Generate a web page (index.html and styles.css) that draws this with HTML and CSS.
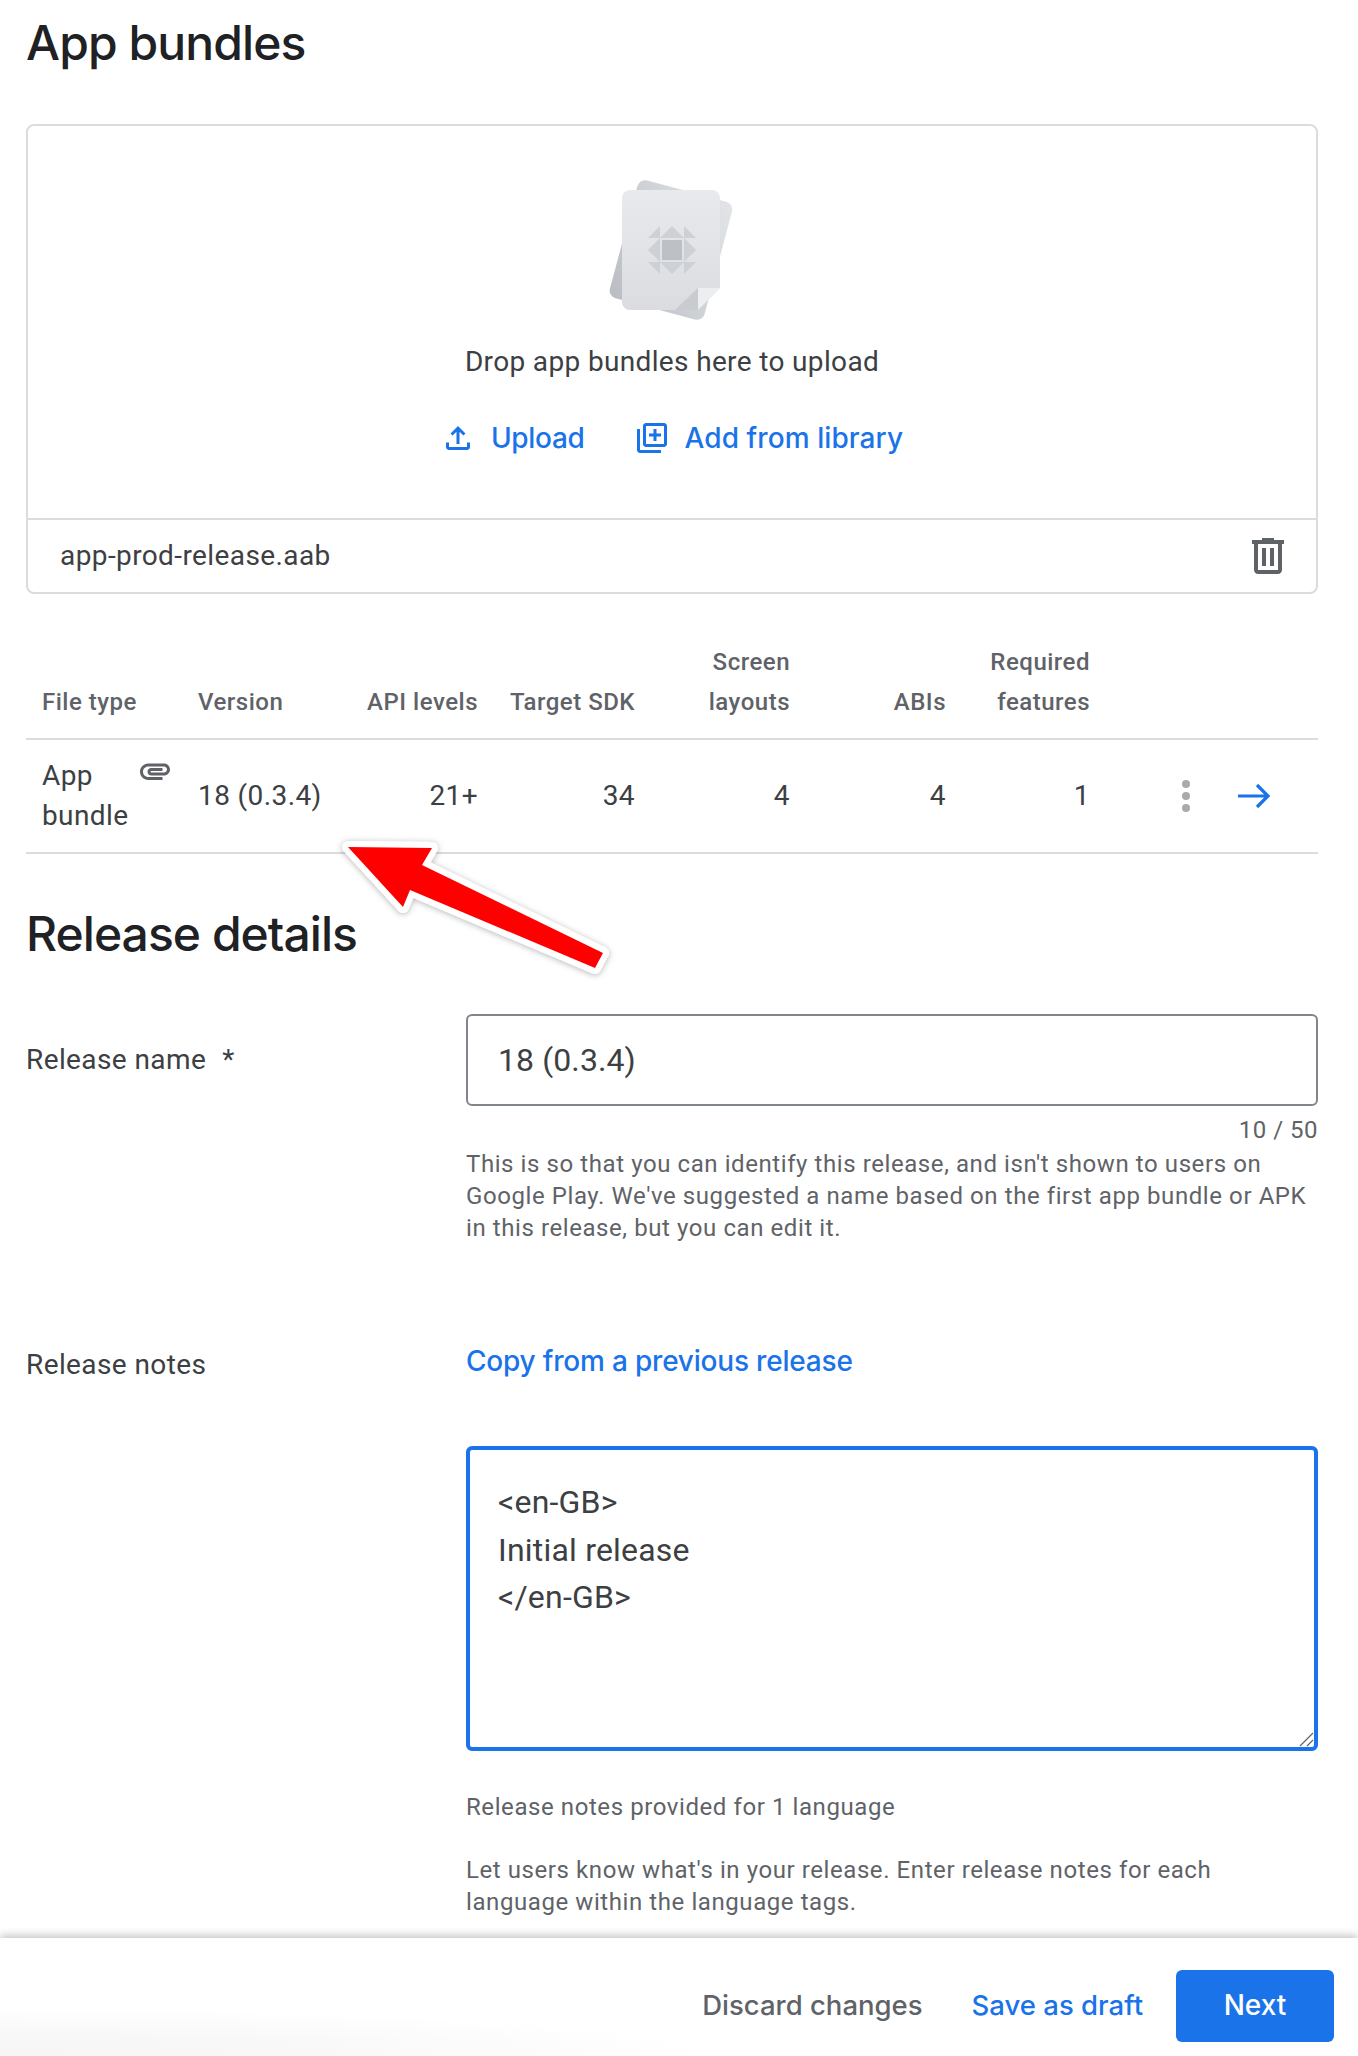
FILE: index.html
```html
<!DOCTYPE html>
<html lang="en">
<head>
<meta charset="utf-8">
<title>App bundles</title>
<link rel="stylesheet" href="styles.css">
</head>
<body>
<main class="page">
  <h1 class="h-bundles">App bundles</h1>

  <section class="upload">
    <div class="drop">
      <svg class="art" width="150" height="160" viewBox="0 0 150 160">
        <defs>
          <linearGradient id="back" x1="1" y1="0" x2="0" y2="1"><stop offset="0" stop-color="#e3e5e8"/><stop offset="1" stop-color="#b9bdc2"/></linearGradient>
          <linearGradient id="front" x1="0" y1="0" x2="0" y2="1"><stop offset="0" stop-color="#e8eaed"/><stop offset="1" stop-color="#dadce0"/></linearGradient>
        </defs>
        <rect x="27" y="9" width="98" height="122" rx="8" fill="url(#back)" transform="rotate(15 76 70)"/>
        <path d="M35 10h82a8 8 0 0 1 8 8v90l-22 22H35a8 8 0 0 1-8-8V18a8 8 0 0 1 8-8z" fill="url(#front)"/>
        <path d="M103 108v22H80z" fill="#c9cbcf"/>
        <path d="M103 108h22l-22 22z" fill="#eceef0"/>
        <rect x="67" y="60" width="20" height="20" fill="#bdc1c6"/>
        <g fill="#cdd0d4">
          <path d="M77 46l12 12H65zM77 94l12-12H65zM53 70l12-12v24zM101 70L89 58v24z"/>
          <path d="M65 46v12H53zM89 46v12h12zM65 94V82H53zM89 94V82h12z"/>
        </g>
      </svg>
      <p class="drop-text">Drop app bundles here to upload</p>
      <div class="drop-actions">
        <a class="action act-upload">
          <svg class="ico36" viewBox="0 0 24 24"><path d="M18 15v3H6v-3H4v3c0 1.100.9 2 2 2h12c1.100 0 2-.9 2-2v-3h-2zM7 9l1.410 1.410L11 7.830V16h2V7.830l2.590 2.580L17 9l-5-5-5 5z"/></svg>
          <span>Upload</span>
        </a>
        <a class="action act-lib">
          <svg class="ico36" viewBox="0 0 24 24"><path d="M4 6H2v14c0 1.100.9 2 2 2h14v-2H4V6zm16-4H8c-1.100 0-2 .9-2 2v12c0 1.100.9 2 2 2h12c1.100 0 2-.9 2-2V4c0-1.100-.9-2-2-2zm0 14H8V4h12v12zm-7-2h2v-3h3V9h-3V6h-2v3h-3v2h3z"/></svg>
          <span>Add from library</span>
        </a>
      </div>
    </div>
    <div class="file-row">
      <span>app-prod-release.aab</span>
      <svg class="trash" viewBox="0 0 24 24"><path d="M15 4V3H9v1H4v2h1v13c0 1.100.9 2 2 2h10c1.100 0 2-.9 2-2V6h1V4h-5zm2 15H7V6h10v13zM9 8h2v9H9zm4 0h2v9h-2z"/></svg>
    </div>
  </section>

  <section class="table">
    <div class="thead">
      <div class="th th-left pad">File type</div>
      <div class="th th-left">Version</div>
      <div class="th">API levels</div>
      <div class="th">Target SDK</div>
      <div class="th">Screen<br>layouts</div>
      <div class="th">ABIs</div>
      <div class="th">Required<br>features</div>
      <div></div>
    </div>
    <div class="tbody">
      <div class="td td-type pad">
        <span class="type-text">App bundle</span>
        <svg class="clip" viewBox="0 0 24 24"><path d="M2 12.500C2 9.460 4.460 7 7.500 7H18c2.210 0 4 1.790 4 4s-1.790 4-4 4H9.500C8.120 15 7 13.880 7 12.500S8.120 10 9.500 10H17v2H9.410c-.55 0-.55 1 0 1H18c1.100 0 2-.9 2-2s-.9-2-2-2H7.500C5.570 9 4 10.570 4 12.500S5.570 16 7.500 16H17v2H7.500C4.460 18 2 15.540 2 12.500z"/></svg>
      </div>
      <div class="td td-left">18 (0.3.4)</div>
      <div class="td">21+</div>
      <div class="td">34</div>
      <div class="td">4</div>
      <div class="td">4</div>
      <div class="td">1</div>
      <div class="td-actions">
        <span class="kebab"><i></i><i></i><i></i></span>
        <svg class="go" viewBox="0 0 32 26"><path d="M0 13h30M19 2l11 11-11 11" fill="none" stroke="#1a73e8" stroke-width="3.200"/></svg>
      </div>
    </div>
  </section>

  <h2 class="h-details">Release details</h2>

  <section class="field name-field">
    <div class="label">Release name<span class="star">*</span></div>
    <div class="control">
      <div class="input">18 (0.3.4)</div>
      <div class="counter">10 / 50</div>
      <p class="help">This is so that you can identify this release, and isn't shown to users on<br>Google Play. We've suggested a name based on the first app bundle or APK<br>in this release, but you can edit it.</p>
    </div>
  </section>

  <section class="field notes-field">
    <div class="label">Release notes</div>
    <div class="control">
      <a class="copy">Copy from a previous release</a>
      <div class="textarea">
        <div>&lt;en-GB&gt;</div>
        <div>Initial release</div>
        <div>&lt;/en-GB&gt;</div>
        <svg class="grip" viewBox="0 0 16 16"><path d="M15 2L2 15M15 9l-6 6" fill="none" stroke="#5f6368" stroke-width="1.200"/></svg>
      </div>
      <p class="help help-a">Release notes provided for 1 language</p>
      <p class="help help-b">Let users know what's in your release. Enter release notes for each<br>language within the language tags.</p>
    </div>
  </section>
</main>

<footer class="bar">
  <a class="bar-btn discard">Discard changes</a>
  <a class="bar-btn draft">Save as draft</a>
  <a class="bar-btn next">Next</a>
</footer>

<svg class="callout" width="300" height="160" viewBox="330 825 300 160">
  <defs><filter id="sh" x="-10%" y="-10%" width="120%" height="120%"><feDropShadow dx="0" dy="1" stdDeviation="3" flood-color="#000" flood-opacity=".3"/></filter></defs>
  <path filter="url(#sh)" d="M348 847L432 848L422 865L603 953L595 968L410 890L403 907Z" fill="#fff" stroke="#fff" stroke-width="12" stroke-linejoin="round"/>
  <path d="M348 847L432 848L422 865L603 953L595 968L410 890L403 907Z" fill="#f00"/>
</svg>
</body>
</html>
```

FILE: styles.css
```css
* { box-sizing: border-box; }
html, body { margin: 0; padding: 0; }
body {
  width: 1358px;
  height: 2056px;
  overflow: hidden;
  position: relative;
  display: flex;
  flex-direction: column;
  background: #fff;
  color: #3c4043;
  font-family: Roboto, "Liberation Sans", sans-serif;
}
p { margin: 0; }
a { color: #1a73e8; }

.page { flex: 1; min-height: 0; overflow: hidden; padding: 0 40px 0 26px; }

.h-bundles, .h-details {
  margin: 0;
  font-family: Inter, Roboto, sans-serif;
  font-weight: 500;
  color: #202124;
  font-size: 48px;
  line-height: 64px;
  letter-spacing: -.9px;
}
.h-bundles { height: 124px; padding-top: 11px; }

.upload { border: 2px solid #dadce0; border-radius: 8px; height: 470px; display: flex; flex-direction: column; }
.drop { height: 394px; border-bottom: 2px solid #dadce0; display: flex; flex-direction: column; align-items: center; padding-top: 54px; }
.art { display: block; margin-left: -4px; flex: none; }
.drop-text { font-size: 28px; line-height: 40px; margin-top: 2px; letter-spacing: .35px; }
.drop-actions { display: flex; margin-top: 36px; margin-left: -1px; }
.action { display: flex; align-items: center; gap: 15px; font-family: Inter, Roboto, sans-serif; font-size: 28px; font-weight: 500; line-height: 40px; }
.act-upload { margin-right: 49px; }
.act-upload span { letter-spacing: -.3px; }
.act-lib span { letter-spacing: .08px; }
.ico36 { width: 36px; height: 36px; fill: #1a73e8; flex: none; }
.file-row { flex: 1; display: flex; align-items: center; justify-content: space-between; padding: 0 24px 2px 32px; font-size: 28px; letter-spacing: .4px; }
.trash { width: 48px; height: 48px; fill: #5f6368; margin-bottom: -2px; }

.table { margin-top: 40px; }
.thead, .tbody { display: grid; grid-template-columns: 172px 150px 130px 157px 155px 156px 144px 1fr; }
.thead { border-bottom: 2px solid #dadce0; height: 106px; padding-bottom: 16px; align-items: end; }
.th { font-size: 24px; font-weight: 500; color: #5f6368; line-height: 40px; text-align: right; letter-spacing: .5px; }
.th-left { text-align: left; }
.pad { padding-left: 16px; }
.tbody { border-bottom: 2px solid #dadce0; height: 114px; align-items: center; }
.td { font-size: 28px; line-height: 40px; text-align: right; letter-spacing: .4px; }
.td-left { text-align: left; }
.td-type { display: flex; align-items: flex-start; justify-content: space-between; padding-right: 25px; text-align: left; }
.type-text { width: 90px; }
.clip { width: 36px; height: 36px; fill: #5f6368; margin: -3px 0 0 0; flex: none; }
.td-actions { display: flex; align-items: center; justify-content: flex-end; padding-right: 48px; gap: 48px; }
.kebab { display: flex; flex-direction: column; gap: 4px; }
.kebab i { display: block; width: 8px; height: 8px; border-radius: 50%; background: #aaa; }
.go { width: 32px; height: 26px; }

.h-details { margin-top: 48px; height: 112px; letter-spacing: -.95px; }

.field { display: grid; grid-template-columns: 440px 1fr; }
.label { font-size: 28px; line-height: 40px; letter-spacing: .4px; }
.star { margin-left: 16px; }
.name-field .label { padding-top: 26px; }
.input { height: 92px; border: 2px solid #80868b; border-radius: 6px; padding: 0 30px; font-size: 32px; line-height: 88px; letter-spacing: .1px; }
.counter { font-size: 24px; line-height: 32px; text-align: right; color: #5f6368; margin-top: 8px; letter-spacing: .5px; }
.help { font-size: 24px; line-height: 32px; color: #5f6368; letter-spacing: .58px; white-space: nowrap; }
.name-field .help { margin-top: 2px; }

.notes-field { margin-top: 97px; }
.notes-field .label { padding-top: 4px; }
.copy { display: block; font-family: Inter, Roboto, sans-serif; font-weight: 500; font-size: 28px; line-height: 40px; letter-spacing: -.2px; }
.textarea { position: relative; margin-top: 65px; height: 305px; border: 4px solid #1a73e8; border-radius: 6px; padding: 29px 28px; font-size: 32px; line-height: 47.500px; letter-spacing: .2px; }
.grip { position: absolute; right: 0; bottom: 0; width: 16px; height: 16px; }
.help-a { margin-top: 40px; }
.help-b { margin-top: 31px; }

.bar {
  flex: none;
  height: 118px;
  background: radial-gradient(ellipse 720px 48px at 0 100%, #f6f6f6 0%, #f8f8f8 45%, #fff 100%);
  box-shadow: 0 -3px 8px rgba(0,0,0,.22);
  display: flex;
  align-items: center;
  justify-content: flex-end;
  padding: 32px 24px 14px 0;
  position: relative;
  z-index: 1;
}
.bar-btn { font-family: Inter, Roboto, sans-serif; font-weight: 500; font-size: 27.500px; }
.discard { color: #5f6368; margin: 0 49px 2px 0; }
.draft { margin: 0 33px 2px 0; }
.next { width: 158px; height: 72px; line-height: 70px; text-align: center; color: #fff; background: #1a73e8; border-radius: 6px; font-size: 28px; }

.callout { position: absolute; left: 330px; top: 825px; z-index: 2; }
```
